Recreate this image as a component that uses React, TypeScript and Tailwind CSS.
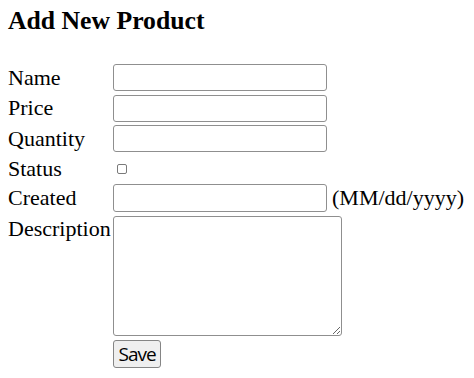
const serif = "font-['Liberation_Serif','Times_New_Roman',serif]";

const fieldBox =
  "box-border h-full w-[214px] rounded-[3px] border border-[#8f8f8f] bg-white px-[3px] outline-none";

function Row({
  label,
  className,
  labelClassName,
  children,
}: {
  label?: string;
  className: string;
  labelClassName?: string;
  children: React.ReactNode;
}) {
  return (
    <div className={"flex " + className}>
      <div className={"w-[105px] shrink-0 text-[22px] leading-[25.3px] text-black " + (labelClassName ?? "")}>
        {label}
      </div>
      {children}
    </div>
  );
}

export default function App() {
  return (
    <div className={"h-[378px] w-[474px] overflow-hidden bg-white pl-[8px] pt-[6px] text-black " + serif}>
      <h3 className="text-[25.7px] font-bold leading-[29.5px]">Add New Product</h3>

      <form className="mt-[28.5px] flex flex-col" onSubmit={(e) => e.preventDefault()}>
        <Row label="Name" className="h-[27px] items-center">
          <input type="text" className={fieldBox} />
        </Row>
        <Row label="Price" className="mt-[3.5px] h-[27px] items-center">
          <input type="text" className={fieldBox} />
        </Row>
        <Row label="Quantity" className="mt-[3.5px] h-[27px] items-center">
          <input type="text" className={fieldBox} />
        </Row>
        <Row label="Status" className="mt-[3.5px] h-[26px] items-center">
          <span className="ml-[4px] box-border block h-[10px] w-[10px] rounded-[2px] border border-[#7a7a7a] bg-white" />
        </Row>
        <Row label="Created" className="mt-[2.5px] h-[28px] items-center">
          <input type="text" className={fieldBox} />
          <span className="ml-[5px] whitespace-nowrap text-[22px] leading-[25.3px]">(MM/dd/yyyy)</span>
        </Row>
        <Row label="Description" className="mt-[4px] h-[120px] items-start" labelClassName="-mt-[0.5px]">
          <textarea className="box-border h-[120px] w-[229px] resize rounded-[3px] border border-[#8f8f8f] bg-white px-[2px] outline-none" />
        </Row>
        <Row className="mt-[4px] h-[28px] items-stretch">
          <button
            type="submit"
            className="box-border h-[28px] rounded-[3px] border border-[#858585] bg-[#efefef] px-[4.5px] font-['Open_Sans','Noto_Sans',sans-serif] text-[19px] leading-[26px] tracking-[-1px] text-black"
          >
            Save
          </button>
        </Row>
      </form>
    </div>
  );
}
